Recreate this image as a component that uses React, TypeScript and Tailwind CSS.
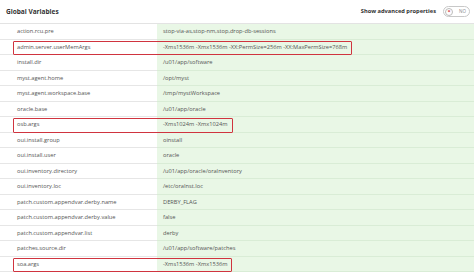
import React from 'react';

type Row = { name: string; value: string; mark?: number };

const rows: Row[] = [
  { name: 'action.rcu.pre', value: 'stop-via-as,stop-nm,stop,drop-db-sessions' },
  { name: 'admin.server.userMemArgs', value: '-Xms1536m -Xmx1536m -XX:PermSize=256m -XX:MaxPermSize=768m', mark: 339 },
  { name: 'install.dir', value: '/u01/app/software' },
  { name: 'myst.agent.home', value: '/opt/myst' },
  { name: 'myst.agent.workspace.base', value: '/tmp/mystWorkspace' },
  { name: 'oracle.base', value: '/u01/app/oracle' },
  { name: 'osb.args', value: '-Xms1024m -Xmx1024m', mark: 220 },
  { name: 'oui.install.group', value: 'oinstall' },
  { name: 'oui.install.user', value: 'oracle' },
  { name: 'oui.inventory.directory', value: '/u01/app/oracle/oraInventory' },
  { name: 'oui.inventory.loc', value: '/etc/oraInst.loc' },
  { name: 'patch.custom.appendvar.derby.name', value: 'DERBY_FLAG' },
  { name: 'patch.custom.appendvar.derby.value', value: 'false' },
  { name: 'patch.custom.appendvar.list', value: 'derby' },
  { name: 'patches.source.dir', value: '/u01/app/software/patches' },
  { name: 'soa.args', value: '-Xms1536m -Xmx1536m', mark: 219 },
];

const App: React.FC = () => {
  return (
    <div className="w-[474px] h-[272px] overflow-hidden bg-white font-['Open_Sans',sans-serif] text-[#555]">
      <div className="h-[23px] flex items-center justify-between pl-[6px] pr-[4px]">
        <h1 className="text-[6.5px] font-bold text-[#333]">Global Variables</h1>
        <div className="flex items-center gap-[7px]">
          <span className="text-[5.7px] font-bold text-[#333]">Show advanced properties</span>
          <div className="w-[27px] h-[11px] rounded-full border border-[#c8c8c8] bg-white flex items-center pl-[1px] pr-[3px] justify-between">
            <div className="w-[8px] h-[8px] rounded-full border border-[#bbb] bg-white flex items-center justify-center text-[5.5px] leading-none font-bold text-[#c33]">
              ×
            </div>
            <span className="text-[4.5px] text-[#888]">NO</span>
          </div>
        </div>
      </div>
      <div className="border-t border-[#e3e3e3]">
        {rows.map((r) => (
          <div key={r.name} className="relative h-[15.5px] flex text-[5.7px] leading-[15px]">
            <div className="w-[157px] pl-[17px] border-b border-[#e6e6e6] bg-white">
              {r.name}
            </div>
            <div className="flex-1 pl-[6px] border-b border-[#d9ecd6] bg-[#e9f7e6]">
              {r.value}
            </div>
            {r.mark && (
              <div
                className="absolute z-10 left-[13px] top-[1px] bottom-0 border-[1.5px] border-solid border-[#d0343f] rounded-[1px]"
                style={{ width: r.mark }}
              />
            )}
          </div>
        ))}
      </div>
    </div>
  );
};

export default App;
